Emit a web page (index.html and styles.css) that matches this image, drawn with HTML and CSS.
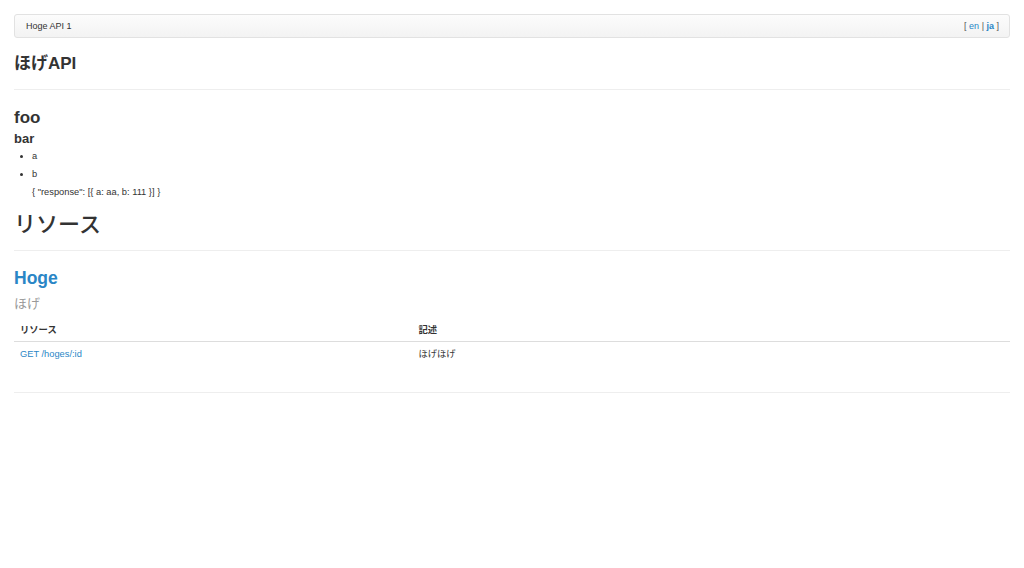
FILE: index.html
```html
<!DOCTYPE html>
<html lang="ja">
<head>
<meta charset="utf-8">
<title>Hoge API 1</title>
<link rel="stylesheet" href="styles.css">
</head>
<body>
<div class="container">
  <div class="navbar">
    <span class="brand">Hoge API 1</span>
    <span class="lang">[ <a href="#">en</a> | <a href="#" class="current">ja</a> ]</span>
  </div>
  <h1 class="title">ほげAPI</h1>
  <hr class="rule">
  <h2 class="h-foo">foo</h2>
  <h3 class="h-bar">bar</h3>
  <ul class="list">
    <li>a</li>
    <li>b</li>
  </ul>
  <p class="code">{ "response": [{ a: aa, b: 111 }] }</p>
  <h1 class="resources">リソース</h1>
  <hr class="rule rule-res">
  <h2 class="res-name">Hoge</h2>
  <p class="res-desc">ほげ</p>
  <table class="res-table">
    <thead>
      <tr><th class="col-res">リソース</th><th>記述</th></tr>
    </thead>
    <tbody>
      <tr><td><a href="#">GET /hoges/:id</a></td><td>ほげほげ</td></tr>
    </tbody>
  </table>
  <hr class="rule rule-end">
</div>
</body>
</html>
```
FILE: styles.css
```css
html, body {
  margin: 0;
  padding: 0;
  background: #fff;
}
body {
  font-family: "Liberation Sans", "Noto Sans CJK JP", sans-serif;
  color: #333;
  font-size: 9.3px;
  line-height: 1.4;
}
a {
  color: #2a86c6;
  text-decoration: none;
}
.container {
  padding: 14px 14px 0 14px;
}
.navbar {
  display: flex;
  justify-content: space-between;
  align-items: center;
  height: 22px;
  padding: 0 10px 0 11px;
  background: linear-gradient(#fcfcfc, #f3f3f3);
  border: 1px solid #e2e2e2;
  border-radius: 3px;
  color: #333;
  font-size: 9px;
}
.lang {
  color: #555;
}
.lang a.current {
  font-weight: bold;
}
.title {
  font-size: 17px;
  font-weight: bold;
  margin: 14px 0 0 0;
  line-height: 24px;
}
.rule {
  border: 0;
  border-top: 1px solid #eee;
  margin: 13px 0 0 0;
}
.h-foo {
  font-size: 17px;
  font-weight: bold;
  margin: 18px 0 0 0;
  line-height: 20px;
}
.h-bar {
  font-size: 13px;
  font-weight: bold;
  margin: 3px 0 0 0;
  line-height: 16px;
}
.list {
  margin: 0;
  padding-left: 18px;
}
.list li {
  line-height: 18px;
}
.code {
  margin: 0 0 0 18px;
  line-height: 18px;
}
.resources {
  font-size: 22px;
  font-weight: 500;
  margin: 9px 0 0 0;
  line-height: 30px;
}
.rule-res {
  margin-top: 10px;
}
.res-name {
  font-size: 17.5px;
  font-weight: bold;
  color: #2a86c6;
  margin: 16px 0 0 0;
  line-height: 22px;
}
.res-desc {
  font-size: 13px;
  color: #999;
  margin: 6px 0 0 0;
  line-height: 18px;
}
.res-table {
  width: 100%;
  border-collapse: collapse;
  margin-top: 6px;
}
.res-table th {
  text-align: left;
  font-weight: bold;
  padding: 4px 6px;
  line-height: 14px;
  border-bottom: 1px solid #ddd;
}
.res-table td {
  padding: 5px 6px 4px 6px;
  line-height: 14px;
}
.col-res {
  width: 40%;
}
.rule-end {
  margin-top: 27px;
}
```
